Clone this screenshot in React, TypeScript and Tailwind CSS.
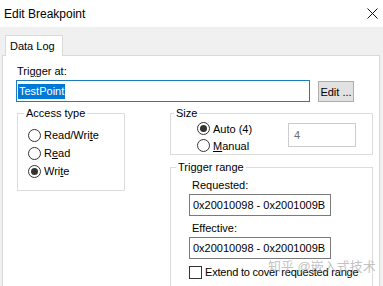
import React from "react";

const font = { fontFamily: '"Liberation Sans", Arial, "Noto Sans CJK SC", sans-serif' };

function Radio({ checked, label }: { checked?: boolean; label: React.ReactNode }) {
  return (
    <div className="flex items-center h-full">
      <span className="w-[13px] h-[13px] rounded-full border border-[#333333] bg-white flex items-center justify-center shrink-0">
        {checked && <span className="w-[7px] h-[7px] rounded-full bg-[#333333]" />}
      </span>
      <span className="ml-[3px] leading-[16px] whitespace-nowrap">{label}</span>
    </div>
  );
}

export default function App() {
  return (
    <div className="w-[383px] h-[286px] overflow-hidden bg-[#f0f0f0] text-[11px] text-black relative" style={font}>
      {/* Title bar */}
      <div className="h-[27px] bg-white flex items-center justify-between pl-[4px] pr-[5px]">
        <span className="leading-[16px] text-[12px]">Edit Breakpoint</span>
        <svg width="11" height="11" viewBox="0 0 11 11">
          <path d="M0.5 0.5 L10.5 10.5 M10.5 0.5 L0.5 10.5" stroke="#111" strokeWidth="1" />
        </svg>
      </div>
      {/* Tabs */}
      <div className="pt-[8px] pl-[5px]">
        <div className="relative z-10 w-[58px] h-[21px] mb-[-1px] bg-white border border-b-0 border-[#d9d9d9] flex items-center pl-[4px]">
          <span className="leading-[16px] whitespace-nowrap">Data Log</span>
        </div>
      </div>
      {/* Panel */}
      <div className="ml-[2px] w-[378px] h-[240px] bg-white border border-[#d9d9d9] pl-[13px] pt-[7px]">
        <div className="ml-[1px] leading-[16px]">
          Tri<span className="underline">g</span>ger at:
        </div>
        <div className="flex items-start mt-[1px]">
          <div className="w-[294px] h-[22px] border border-[#1e7bbf] flex items-center pl-[1px]">
            <span className="bg-[#0078d7] text-white leading-[15px] px-[1px]">TestPoint</span>
          </div>
          <div className="ml-[8px] mt-[1px] w-[36px] h-[21px] bg-[#e1e1e1] border border-[#adadad] flex items-center justify-center">
            <span className="leading-[16px] whitespace-nowrap">Edit ...</span>
          </div>
        </div>
        <div className="flex items-start mt-[4px]">
          {/* Access type */}
          <fieldset className="ml-[1px] w-[108px] border border-[#dcdcdc]">
            <legend className="ml-[6px] px-[2px] leading-[14px]">Access type</legend>
            <div className="pt-[6px] pl-[10px] pb-[10px]">
              <div className="h-[18px]">
                <Radio label={<>Read/Wri<span className="underline">t</span>e</>} />
              </div>
              <div className="h-[18px]">
                <Radio label={<>R<span className="underline">e</span>ad</>} />
              </div>
              <div className="h-[18px]">
                <Radio checked label={<>Wri<span className="underline">t</span>e</>} />
              </div>
            </div>
          </fieldset>
          {/* Right column */}
          <div className="ml-[45px] w-[203px] flex flex-col">
            <fieldset className="border border-[#dcdcdc]">
              <legend className="ml-[3px] px-[2px] leading-[14px]">Size</legend>
              <div className="flex items-start pl-[26px]">
                <div className="flex flex-col">
                  <div className="h-[17px]">
                    <Radio checked label="Auto (4)" />
                  </div>
                  <div className="h-[17px]">
                    <Radio label={<><span className="underline">M</span>anual</>} />
                  </div>
                </div>
                <div className="ml-auto mr-[16px] mt-[3px] w-[68px] h-[24px] border border-[#cccccc] bg-white pl-[5px] pt-[3px] text-[#6d6d6d] leading-[16px]">
                  4
                </div>
              </div>
            </fieldset>
            <fieldset className="mt-[5px] h-[140px] border border-[#dcdcdc]">
              <legend className="ml-[5px] px-[2px] leading-[14px]">Trigger range</legend>
              <div className="pl-[18px]">
                <div className="pt-[3px] pl-[3px] leading-[16px]">Requested:</div>
                <div className="mt-[1px] w-[142px] h-[22px] border border-[#7a7a7a] flex items-center pl-[3px]">
                  <span className="leading-[16px] whitespace-nowrap">0x20010098 - 0x2001009B</span>
                </div>
                <div className="mt-[4px] pl-[3px] leading-[16px]">Effective:</div>
                <div className="mt-[1px] w-[142px] h-[22px] border border-[#7a7a7a] flex items-center pl-[3px]">
                  <span className="leading-[16px] whitespace-nowrap">0x20010098 - 0x2001009B</span>
                </div>
                <div className="mt-[5px] h-[16px] flex items-center">
                  <span className="w-[13px] h-[13px] border border-[#333333] bg-white shrink-0" />
                  <span className="ml-[3px] leading-[16px] whitespace-nowrap tracking-[-0.2px]">Extend to cover requested range</span>
                </div>
              </div>
            </fieldset>
          </div>
        </div>
      </div>
      {/* watermark */}
      <div className="absolute left-[268px] top-[258px] text-[13px] leading-[18px] text-[#9a9a9a] opacity-60 whitespace-nowrap pointer-events-none">
        知乎 @嵌入式技术
      </div>
    </div>
  );
}
